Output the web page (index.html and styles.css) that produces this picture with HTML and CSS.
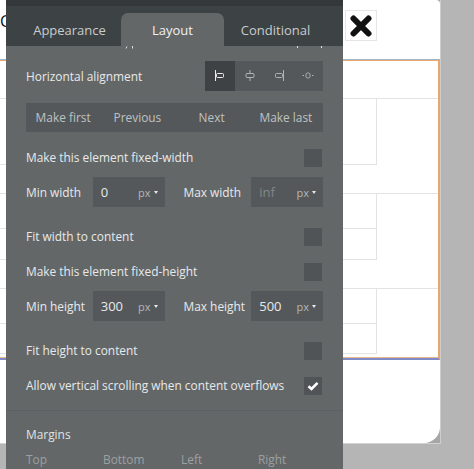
FILE: index.html
```html
<!DOCTYPE html>
<html lang="en">
<head>
<meta charset="utf-8">
<title>Layout panel</title>
<link rel="stylesheet" href="styles.css">
</head>
<body>
<div class="stage">
  <div class="canvas">
    <div class="page">
      <div class="head">
        <span class="head-text">C</span>
        <div class="close">
          <svg width="22" height="22" viewBox="0 0 22 22"><path d="M3.5 3.5 18.5 18.5M18.5 3.5 3.5 18.5" stroke="#111" stroke-width="6" stroke-linecap="round" fill="none"/></svg>
        </div>
      </div>
      <div class="frame">
        <div class="frame-top"></div>
        <div class="cell cell-a"></div>
        <div class="cell-group group-a"><div class="cell cell-b"></div><div class="cell cell-c"></div></div>
        <div class="cell-group group-b"><div class="cell cell-d"></div><div class="cell cell-e"></div></div>
      </div>
    </div>
  </div>

  <aside class="panel">
    <div class="tabs">
      <div class="tab tab-first">Appearance</div>
      <div class="tab tab-active">Layout</div>
      <div class="tab tab-last">Conditional</div>
    </div>
    <div class="body">
      <svg class="fragments" width="337" height="3" viewBox="0 0 337 3"><path d="M121 0.5 120 2.5M126.5 0v2.5M291.5 0v2M315.5 0v2" stroke="#dfe1e2" stroke-width="1" fill="none"/></svg>
      <div class="row row-align">
        <span class="label">Horizontal alignment</span>
        <div class="seg">
          <div class="seg-item seg-active"><svg width="14" height="12" viewBox="0 0 14 12"><path d="M2.5 0v11" stroke="#ececec" fill="none"/><rect x="3.5" y="3.5" width="7" height="4" rx="1" fill="none" stroke="#ececec"/></svg></div>
          <div class="seg-item"><svg width="14" height="12" viewBox="0 0 14 12"><path d="M7 0v11" stroke="#b0b3b4" fill="none"/><rect x="3" y="3.5" width="8" height="4" rx="1" fill="#54585a" stroke="#b0b3b4"/></svg></div>
          <div class="seg-item"><svg width="14" height="12" viewBox="0 0 14 12"><path d="M11.5 0v11" stroke="#b0b3b4" fill="none"/><rect x="3.5" y="3.5" width="7" height="4" rx="1" fill="none" stroke="#b0b3b4"/></svg></div>
          <div class="seg-item"><svg width="14" height="12" viewBox="0 0 14 12"><rect x="5" y="3" width="4" height="5" rx="1.5" fill="none" stroke="#b0b3b4"/><path d="M1.5 5.5h1.5M11 5.5h1.5" stroke="#b0b3b4" fill="none"/></svg></div>
        </div>
      </div>
      <div class="order">
        <span>Make first</span><span>Previous</span><span>Next</span><span>Make last</span>
      </div>

      <div class="row row-check row-fw">
        <span class="label">Make this element fixed-width</span><span class="check"></span>
      </div>
      <div class="row row-fields">
        <span class="label label-min">Min width</span>
        <div class="field"><span class="value">0</span><span class="unit">px<i class="caret"></i></span></div>
        <span class="label label-max">Max width</span>
        <div class="field"><span class="value value-off">inf</span><span class="unit">px<i class="caret"></i></span></div>
      </div>
      <div class="row row-check row-fit">
        <span class="label">Fit width to content</span><span class="check"></span>
      </div>
      <div class="row row-check row-next">
        <span class="label">Make this element fixed-height</span><span class="check"></span>
      </div>
      <div class="row row-fields">
        <span class="label label-min">Min height</span>
        <div class="field"><span class="value">300</span><span class="unit">px<i class="caret"></i></span></div>
        <span class="label label-max">Max height</span>
        <div class="field"><span class="value">500</span><span class="unit">px<i class="caret"></i></span></div>
      </div>
      <div class="row row-check row-fit">
        <span class="label">Fit height to content</span><span class="check"></span>
      </div>
      <div class="row row-check row-next">
        <span class="label">Allow vertical scrolling when content overflows</span>
        <span class="check"><svg width="12" height="10" viewBox="0 0 12 10"><path d="M1.5 5.2 4.5 8 10.5 1.8" stroke="#fff" stroke-width="2.6" fill="none"/></svg></span>
      </div>
      <div class="divider"></div>
      <div class="margins-title">Margins</div>
      <div class="margins"><span>Top</span><span>Bottom</span><span>Left</span><span>Right</span></div>
    </div>
  </aside>
</div>
</body>
</html>
```
FILE: styles.css
```css
* { box-sizing: border-box; }
html, body { margin: 0; padding: 0; }
body { font-family: "Open Sans", "Noto Sans", sans-serif; }

.stage {
  position: relative;
  width: 474px;
  height: 469px;
  overflow: hidden;
  background: #b5b5b5;
}

/* page canvas behind the panel */
.canvas {
  width: 441px;
  height: 444px;
  background: #a6a6a6;
  border-right: 1px solid #cdcdcd;
  border-bottom: 1px solid #d2d2d2;
}
.page {
  height: 100%;
  background: #fff;
  border-top-right-radius: 4px;
  border-bottom-right-radius: 16px;
  overflow: hidden;
}
.head {
  display: flex;
  height: 60px;
  padding-top: 10px;
  color: #111;
  border-bottom: 1px solid #a3b6c6;
}
.head-text { width: 345px; font-size: 16px; line-height: 22px; }
.close {
  display: flex;
  align-items: center;
  justify-content: center;
  width: 32px;
  height: 31px;
  border: 1px solid #e6e6e6;
}
.frame {
  height: 300px;
  border-top: 1px solid #e9a873;
  border-right: 2px solid #e6a670;
  border-bottom: 2px solid #7f8bc8;
  box-shadow: inset 0 -1px 0 #e6b88f;
}
.frame-top { height: 38px; border-bottom: 1px solid #e3e3e3; }
.cell { width: 377px; border-right: 1px solid #e3e3e3; border-bottom: 1px solid #e3e3e3; }
.cell-a { height: 66px; }
.group-a { margin-top: 28px; border-top: 1px solid #e3e3e3; }
.group-b { margin-top: 28px; border-top: 1px solid #e3e3e3; }
.cell-b { height: 35px; }
.cell-c { height: 31px; }
.cell-d { height: 35px; }
.cell-e { height: 30px; }

/* floating property panel */
.panel {
  position: absolute;
  top: 0;
  left: 6px;
  width: 337px;
  height: 469px;
  background: #636768;
  overflow: hidden;
}
.tabs {
  display: flex;
  align-items: flex-end;
  height: 46px;
  background: linear-gradient(#34383a 0, #34383a 6px, #3d4244 6px);
}
.tab {
  height: 33px;
  text-align: center;
  font-size: 13px;
  line-height: 34px;
  color: #c9cccd;
}
.tab-first { width: 115px; padding-left: 12px; }
.tab-active {
  width: 103px;
  background: #636768;
  border-radius: 7px 7px 0 0;
  color: #f1f2f2;
}
.tab-last { width: 119px; padding-right: 16px; }

.body { display: flow-root; }
.fragments { display: block; }

.row { display: flex; align-items: center; padding: 0 20px; }
.label { font-size: 11.9px; line-height: 18px; color: #e8e9ea; white-space: nowrap; }

.row-align { justify-content: space-between; height: 30px; margin-top: 12px; }
.seg { display: flex; width: 118px; height: 30px; background: #54585a; }
.seg-item { display: flex; flex: 1; align-items: center; justify-content: center; }
.seg-active { flex: none; width: 30px; background: #3f4244; }

.order {
  display: grid;
  grid-template-columns: repeat(4, 1fr);
  align-items: center;
  height: 29px;
  margin: 12px 20px 0;
  padding-bottom: 1px;
  background: #54585a;
  text-align: center;
  font-size: 11.9px;
  color: #bfc2c3;
}

.row-check { justify-content: space-between; height: 18px; }
.row-check .label { padding-bottom: 2px; }
.row-fw { margin-top: 17px; }
.row-fit { margin-top: 21px; }
.row-next { margin-top: 17px; }
.check {
  display: flex;
  align-items: center;
  justify-content: center;
  width: 18px;
  height: 18px;
  margin-right: 1px;
  background: #505456;
}

.row-fields { height: 30px; margin-top: 10px; }
.label-min { width: 67px; }
.label-max { width: 68px; margin-left: 19px; }
.field {
  display: flex;
  align-items: center;
  justify-content: space-between;
  width: 72px;
  height: 30px;
  padding: 0 7px 0 8px;
  background: #54585a;
}
.value { font-size: 13px; color: #e8e9ea; }
.value-off { color: #83878a; }
.unit { display: flex; align-items: center; gap: 3px; font-size: 11px; color: #b4b7b8; }
.caret {
  width: 0;
  height: 0;
  border-left: 2.5px solid transparent;
  border-right: 2.5px solid transparent;
  border-top: 3px solid #e8e9ea;
}

.divider { height: 1px; margin-top: 15px; background: #5c6062; }
.margins-title { margin: 14px 20px 0; font-size: 11.9px; line-height: 18px; color: #e0e2e3; }
.margins {
  display: grid;
  grid-template-columns: 77px 78px 77px 1fr;
  margin: 7px 20px 0;
  font-size: 11.9px;
  line-height: 18px;
  color: #9da0a2;
}
```
